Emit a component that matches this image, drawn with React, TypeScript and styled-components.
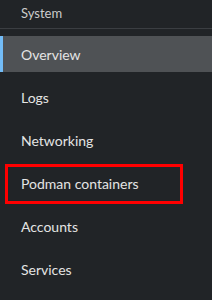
import React from "react";
import styled, { createGlobalStyle } from "styled-components";

const GlobalStyle = createGlobalStyle`
    html, body {
        margin: 0;
        padding: 0;
        background: #212427;
    }
    body {
        font-family: Lato, "Liberation Sans", sans-serif;
    }
`;

const Sidebar = styled.nav`
    width: 212px;
    height: 300px;
    background: #212427;
    overflow: hidden;
`;

const SectionTitle = styled.div`
    box-sizing: border-box;
    height: 29px;
    padding: 5px 0 0 21px;
    font-size: 13px;
    line-height: 16px;
    color: #cccccc;
    border-bottom: 1px solid #3b3e42;
`;

const List = styled.ul`
    list-style: none;
    margin: 0;
    padding: 7px 0 0;
    display: flex;
    flex-direction: column;
    gap: 7px;
`;

const Item = styled.li<{ $active?: boolean }>`
    position: relative;
    box-sizing: border-box;
    height: 36px;
    display: flex;
    align-items: center;
    font-size: 14px;
    color: #e4e4e4;
    background: ${(p) => (p.$active ? "#4f5255" : "transparent")};
    border-left: ${(p) => (p.$active ? "3px solid #73bcf7" : "none")};
    padding-left: ${(p) => (p.$active ? "18px" : "21px")};
`;

const Highlight = styled.span`
    position: absolute;
    left: 5px;
    top: -1px;
    width: 178px;
    height: 40px;
    box-sizing: border-box;
    border: 3px solid #ff0000;
    pointer-events: none;
`;

const items = ["Overview", "Logs", "Networking", "Podman containers", "Accounts", "Services"];

const App = () => {
    return (
        <>
            <GlobalStyle />
            <Sidebar>
                <SectionTitle>System</SectionTitle>
                <List>
                    {items.map((name) => (
                        <Item key={name} $active={name === "Overview"}>
                            {name}
                            {name === "Podman containers" && <Highlight />}
                        </Item>
                    ))}
                </List>
            </Sidebar>
        </>
    );
};

export default App;
